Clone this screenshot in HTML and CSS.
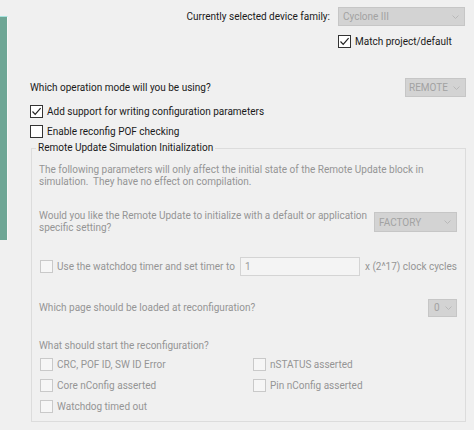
FILE: index.html
```html
<!DOCTYPE html>
<html>
<head>
<meta charset="utf-8">
<link rel="stylesheet" href="styles.css">
</head>
<body>
<div class="window">
  <div class="stripe"></div>
  <div class="main">
    <div class="row family">
      <span class="label">Currently selected device family:</span>
      <div class="combo combo-family"><span>Cyclone III</span><svg class="arrow" width="7" height="4" viewBox="0 0 7 4"><path d="M0.5 0.5 L3.5 3.5 L6.5 0.5" fill="none" stroke="#b8b8b8" stroke-width="1"/></svg></div>
    </div>
    <div class="row match">
      <div class="match-wrap">
        <span class="box"><svg width="11" height="11" viewBox="0 0 11 11"><path d="M1.5 5.5 L4.2 8.3 L9.6 2.2" fill="none" stroke="#222" stroke-width="1.2"/></svg></span>
        <span>Match project/default</span>
      </div>
    </div>
    <div class="row mode">
      <span>Which operation mode will you be using?</span>
      <div class="combo combo-mode"><span>REMOTE</span><svg class="arrow" width="7" height="4" viewBox="0 0 7 4"><path d="M0.5 0.5 L3.5 3.5 L6.5 0.5" fill="none" stroke="#b8b8b8" stroke-width="1"/></svg></div>
    </div>
    <div class="row opt">
      <span class="box"><svg width="11" height="11" viewBox="0 0 11 11"><path d="M1.5 5.5 L4.2 8.3 L9.6 2.2" fill="none" stroke="#222" stroke-width="1.2"/></svg></span>
      <span>Add support for writing configuration parameters</span>
    </div>
    <div class="row opt">
      <span class="box"></span>
      <span>Enable reconfig POF checking</span>
    </div>
    <fieldset class="group">
      <legend>Remote Update Simulation Initialization</legend>
      <p class="desc">The following parameters will only affect the initial state of the Remote Update block in<br>simulation.&nbsp; They have no effect on compilation.</p>
      <div class="row question">
        <p class="qtext">Would you like the Remote Update to initialize with a default or application<br>specific setting?</p>
        <div class="combo combo-factory"><span>FACTORY</span><svg class="arrow" width="7" height="4" viewBox="0 0 7 4"><path d="M0.5 0.5 L3.5 3.5 L6.5 0.5" fill="none" stroke="#b8b8b8" stroke-width="1"/></svg></div>
      </div>
      <div class="row watchdog">
        <div class="wd-label"><span class="box dis"></span><span>Use the watchdog timer and set timer to</span></div>
        <div class="input">1</div>
        <span class="cycles">x (2^17) clock cycles</span>
      </div>
      <div class="row page">
        <span>Which page should be loaded at reconfiguration?</span>
        <div class="combo combo-page"><span>0</span><svg class="arrow" width="7" height="4" viewBox="0 0 7 4"><path d="M0.5 0.5 L3.5 3.5 L6.5 0.5" fill="none" stroke="#b8b8b8" stroke-width="1"/></svg></div>
      </div>
      <p class="start">What should start the reconfiguration?</p>
      <div class="triggers">
        <div class="trig"><span class="box dis"></span><span>CRC, POF ID, SW ID Error</span></div>
        <div class="trig"><span class="box dis"></span><span>nSTATUS asserted</span></div>
        <div class="trig"><span class="box dis"></span><span>Core nConfig asserted</span></div>
        <div class="trig"><span class="box dis"></span><span>Pin nConfig asserted</span></div>
        <div class="trig"><span class="box dis"></span><span>Watchdog timed out</span></div>
      </div>
    </fieldset>
  </div>
</div>
</body>
</html>
```

FILE: styles.css
```css
* { box-sizing: border-box; }
html, body { margin: 0; padding: 0; }
body {
  background: #f0f0f0;
  font-family: Roboto, "Noto Sans", sans-serif;
  font-size: 10px;
  color: #1a1a1a;
}
p { margin: 0; }
.window {
  display: flex;
  width: 474px;
  height: 430px;
  overflow: hidden;
  white-space: nowrap;
}
.stripe {
  flex: none;
  width: 8px;
  height: 224px;
  margin-top: 16px;
  background: #6ea695;
  border-top: 1px solid #a8e4e0;
  border-right: 1px solid #f8f8f8;
}
.main {
  flex: 1;
  padding: 0 8px 0 22px;
  display: flex;
  flex-direction: column;
}
.row { display: flex; align-items: center; }
.family {
  margin-top: 7px;
  height: 19px;
  justify-content: flex-end;
  padding-right: 1px;
}
.family .label { margin-right: 8px; }
.combo {
  display: flex;
  align-items: center;
  justify-content: space-between;
  background: #d3d3d3;
  border: 1px solid #c6c6c6;
  color: #a2a2a2;
  padding: 0 5px 0 4px;
}
.arrow { flex: none; }
.combo-family { width: 127px; height: 19px; }
.match { margin-top: 5px; height: 20px; justify-content: flex-end; padding-right: 1px; }
.match-wrap { width: 127px; display: flex; align-items: center; }
.box {
  flex: none;
  width: 13px;
  height: 13px;
  border: 1px solid #333;
  background: #fff;
  margin-right: 4px;
  display: flex;
  align-items: center;
  justify-content: center;
}
.box.dis { border-color: #c9c9c9; background: #f6f6f6; }
.mode { margin-top: 27px; height: 19px; justify-content: space-between; }
.combo-mode { width: 61px; height: 19px; padding: 0 5px 0 3px; }
.opt { height: 20px; }
.mode + .opt { margin-top: 4px; }
.group {
  margin: 0 0 0 1px;
  padding: 0 8px 4px 7px;
  border: 1px solid #dcdcdc;
  min-width: 0;
  height: 281px;
  color: #959595;
}
.group legend {
  padding: 0 2px;
  margin-left: -3px;
  line-height: 14px;
  color: #1a1a1a;
}
.desc { margin-top: 9px; line-height: 12px; }
.question { margin-top: 22px; height: 24px; justify-content: space-between; }
.qtext { line-height: 12px; }
.combo-factory { width: 83px; height: 20px; }
.watchdog { margin-top: 22px; height: 20px; }
.wd-label { width: 201px; display: flex; align-items: center; padding-left: 1px; }
.input {
  width: 120px;
  height: 19px;
  border: 1px solid #d4d4d4;
  background: #f4f4f4;
  padding: 1px 4px;
  line-height: 15px;
  color: #9a9a9a;
}
.cycles { margin-left: auto; }
.page { margin-top: 22px; height: 19px; justify-content: space-between; }
.combo-page { width: 29px; height: 18px; padding: 0 4px 0 5px; }
.start { margin-top: 23px; line-height: 12px; }
.triggers {
  margin-top: 2px;
  display: grid;
  grid-template-columns: 213px 1fr;
  grid-auto-rows: 21px;
}
.trig { display: flex; align-items: center; padding-left: 1px; }
```
